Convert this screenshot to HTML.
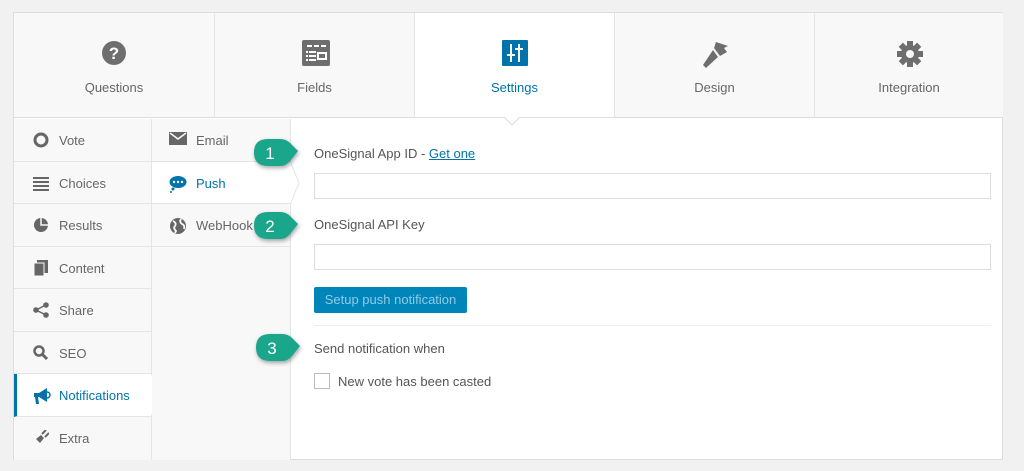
<!DOCTYPE html>
<html><head><style>
*{box-sizing:border-box;margin:0;padding:0}
body{width:1024px;height:471px;background:#f1f1f1;font-family:"Liberation Sans",sans-serif;font-size:13px;color:#555;position:relative;overflow:hidden}
.box{position:absolute;left:13px;top:12px;width:990px;height:448px;border:1px solid #ddd;background:#fff}
.tab{position:absolute;top:0;height:105px;width:200px;background:#f8f8f8;border-right:1px solid #e5e5e5;border-bottom:1px solid #ddd;text-align:center}
.tab .lbl{position:absolute;left:0;right:0;top:67px;font-size:13px;color:#666}
.tab svg{position:absolute;left:50%;top:27px;margin-left:-13px}
.tab.act{background:#fff;border-bottom:1px solid #ddd}
.tab.act .lbl{color:#0073aa}
.col1{position:absolute;left:0;top:106px;width:138px;height:341px;background:#f8f8f8;border-right:1px solid #e5e5e5}
.col2{position:absolute;left:138px;top:106px;width:139px;height:341px;background:#f8f8f8;border-right:1px solid #e5e5e5}
.row{height:42.5px;border-bottom:1px solid #e5e5e5;position:relative;color:#666}
.row span{position:absolute;top:14px;left:45px}
.row svg{position:absolute;left:19px;top:13px}
.col2 .row span{left:44px}
.col2 .row svg{left:17px}
.row.act{background:#fff;color:#0073aa}
.col1 .row.act{border-left:3px solid #0073aa}
.lab{position:absolute;left:314px;font-size:13px;color:#555}
.inp{position:absolute;left:314px;width:677px;height:26px;border:1px solid #ddd;background:#fff}
.btn{position:absolute;left:314px;top:287px;width:153px;height:26px;background:#0085ba;border-radius:2px;color:#8fcbe6;font-size:13px;text-align:center;line-height:26px}
.mark{position:absolute}
</style></head><body>
<div class="box">
 <div class="tab" style="left:0;width:201px"><svg width="26" height="26" viewBox="0 0 26 26"><circle cx="13" cy="13" r="12" fill="#6e6e6e"/><text x="13" y="19" text-anchor="middle" fill="#fff" font-size="17" font-weight="bold" font-family="Liberation Sans">?</text></svg><div class="lbl">Questions</div></div>
 <div class="tab" style="left:201px"><svg width="28" height="26" viewBox="0 0 28 26"><rect x="0" y="0" width="28" height="26" rx="2" fill="#6e6e6e"/><rect x="5" y="5" width="5" height="2" fill="#fff"/><rect x="12" y="5" width="5" height="2" fill="#fff"/><rect x="19" y="5" width="5" height="2" fill="#fff"/><rect x="4" y="11" width="2" height="2" fill="#fff"/><rect x="7" y="11" width="7" height="2" fill="#fff"/><rect x="4" y="15" width="2" height="2" fill="#fff"/><rect x="7" y="15" width="7" height="2" fill="#fff"/><rect x="4" y="19" width="2" height="2" fill="#fff"/><rect x="7" y="19" width="7" height="2" fill="#fff"/><rect x="16" y="13" width="8" height="6" fill="none" stroke="#fff" stroke-width="2"/></svg><div class="lbl">Fields</div></div>
 <div class="tab act" style="left:401px"><svg width="26" height="26" viewBox="0 0 26 26"><rect width="26" height="26" rx="1" fill="#0073aa"/><rect x="8" y="4" width="2" height="18" fill="#fff"/><rect x="5" y="14" width="8" height="2" fill="#fff"/><rect x="16" y="4" width="2" height="18" fill="#fff"/><rect x="13" y="8" width="8" height="2" fill="#fff"/></svg><div class="lbl">Settings</div></div>
 <div class="tab" style="left:601px"><svg width="28" height="30" viewBox="0 0 28 30"><path d="M14 2 L26 6 L22 8 L25 12 L18 16 L12 8 Z" fill="#6e6e6e"/><path d="M11 10 L16 17 L4 28 L1 25 Z" fill="#6e6e6e"/></svg><div class="lbl">Design</div></div>
 <div class="tab" style="left:801px;width:188px;border-right:none"><svg width="28" height="28" viewBox="0 0 28 28"><g fill="#6e6e6e"><circle cx="14" cy="14" r="9"/><rect x="11" y="1" width="6" height="26"/><rect x="1" y="11" width="26" height="6"/><rect x="11" y="1" width="6" height="26" transform="rotate(45 14 14)"/><rect x="11" y="1" width="6" height="26" transform="rotate(-45 14 14)"/></g><circle cx="14" cy="14" r="4" fill="#f8f8f8"/></svg><div class="lbl">Integration</div></div>
 <svg style="position:absolute;left:490px;top:104px" width="16" height="9"><path d="M0 0 L8 8 L16 0" fill="#fff" stroke="#ddd"/></svg>
 <div class="col1">
  <div class="row"><svg width="16" height="16"><circle cx="8" cy="8" r="6" fill="none" stroke="#666" stroke-width="3"/></svg><span>Vote</span></div>
  <div class="row"><svg width="16" height="16"><g fill="#666"><rect y="2" width="16" height="2"/><rect y="6" width="16" height="2"/><rect y="10" width="16" height="2"/><rect y="14" width="16" height="2"/></g></svg><span>Choices</span></div>
  <div class="row"><svg width="16" height="16"><circle cx="8" cy="8" r="7" fill="#666"/><path d="M8 1 V8 H15" stroke="#f8f8f8" stroke-width="1.5" fill="none"/></svg><span>Results</span></div>
  <div class="row"><svg width="16" height="16"><rect x="4" y="0" width="11" height="13" fill="#666"/><rect x="1" y="3" width="10" height="13" fill="#666" stroke="#f8f8f8"/></svg><span>Content</span></div>
  <div class="row"><svg width="16" height="16"><g fill="#666"><circle cx="13" cy="3" r="2.8"/><circle cx="3" cy="8" r="2.8"/><circle cx="13" cy="13" r="2.8"/></g><path d="M13 3 L3 8 L13 13" stroke="#666" stroke-width="1.5" fill="none"/></svg><span>Share</span></div>
  <div class="row"><svg width="16" height="16"><circle cx="6" cy="6" r="4.5" fill="none" stroke="#666" stroke-width="2.5"/><path d="M9 9 L14 14" stroke="#666" stroke-width="3"/></svg><span>SEO</span></div>
  <div class="row act"><svg width="18" height="18" style="left:16px"><path d="M1 6 H6 L14 1 V15 L6 10 H5 L6 17 H3 L2 10 H1Z" fill="#0073aa"/><circle cx="14" cy="8" r="3" fill="none" stroke="#0073aa" stroke-width="1.5"/></svg><span style="left:42px">Notifications</span></div>
  <div class="row" style="border-bottom:none"><svg width="16" height="16"><path d="M1 15 L5 11 L3 9 L8 5 L11 8 L7 13 L5 11" fill="#666"/><path d="M9 4 L13 0 M12 7 L16 3" stroke="#666" stroke-width="2"/></svg><span>Extra</span></div>
 </div>
 <svg style="position:absolute;left:137px;top:360px" width="10" height="44"><path d="M0 0 L9 22 L0 44" fill="#fff" stroke="#e5e5e5"/></svg>
 <div class="col2">
  <div class="row"><svg width="18" height="14"><rect width="18" height="13" fill="#666"/><path d="M1 1 L9 7 L17 1" stroke="#f8f8f8" stroke-width="1.5" fill="none"/></svg><span>Email</span></div>
  <div class="row act"><svg width="18" height="18"><ellipse cx="9" cy="7" rx="8.5" ry="6" fill="#0073aa"/><circle cx="5" cy="7" r="1.2" fill="#fff"/><circle cx="9" cy="7" r="1.2" fill="#fff"/><circle cx="13" cy="7" r="1.2" fill="#fff"/><circle cx="4" cy="14" r="1.5" fill="#0073aa"/><circle cx="2" cy="17" r="1" fill="#0073aa"/></svg><span>Push</span></div>
  <div class="row"><svg width="18" height="18"><circle cx="9" cy="9" r="8" fill="#666"/><path d="M4 4 Q8 6 6 9 Q4 11 7 14 L6 16 M12 2 Q10 5 13 7 Q16 8 15 12" stroke="#f8f8f8" stroke-width="1.8" fill="none"/></svg><span>WebHook</span></div>
 </div>
 <svg style="position:absolute;left:276px;top:148px" width="10" height="44"><path d="M0 0 L9 22 L0 44" fill="#fff" stroke="#e5e5e5"/></svg>
</div>
<div class="lab" style="top:146px">OneSignal App ID - <span style="color:#0073aa;text-decoration:underline">Get one</span></div>
<div class="inp" style="top:173px"></div>
<div class="lab" style="top:217px">OneSignal API Key</div>
<div class="inp" style="top:244px"></div>
<div class="btn">Setup push notification</div>
<div style="position:absolute;left:314px;top:325px;width:677px;height:1px;background:#eee"></div>
<div class="lab" style="top:341px">Send notification when</div>
<div style="position:absolute;left:314px;top:373px;width:16px;height:16px;border:1px solid #bbb;background:#fff"></div>
<div class="lab" style="top:374px;left:338px">New vote has been casted</div>
<svg class="mark" style="left:250px;top:136px" width="60" height="40"><path d="M18 3 H30 Q36 3 40 7 L48 15 L40 25 Q36 30 30 30 H18 Q4 30 4 16.5 Q4 3 18 3Z" fill="#1aa68a" filter="drop-shadow(1px 2px 2px rgba(0,0,0,.35))"/><text x="20" y="23" text-anchor="middle" fill="#fff" font-size="17" font-family="Liberation Sans">1</text></svg>
<svg class="mark" style="left:250px;top:209px" width="60" height="40"><path d="M18 3 H30 Q36 3 40 7 L48 15 L40 25 Q36 30 30 30 H18 Q4 30 4 16.5 Q4 3 18 3Z" fill="#1aa68a" filter="drop-shadow(1px 2px 2px rgba(0,0,0,.35))"/><text x="20" y="23" text-anchor="middle" fill="#fff" font-size="17" font-family="Liberation Sans">2</text></svg>
<svg class="mark" style="left:252px;top:331px" width="60" height="40"><path d="M18 3 H30 Q36 3 40 7 L48 15 L40 25 Q36 30 30 30 H18 Q4 30 4 16.5 Q4 3 18 3Z" fill="#1aa68a" filter="drop-shadow(1px 2px 2px rgba(0,0,0,.35))"/><text x="20" y="23" text-anchor="middle" fill="#fff" font-size="17" font-family="Liberation Sans">3</text></svg>
</body></html>
